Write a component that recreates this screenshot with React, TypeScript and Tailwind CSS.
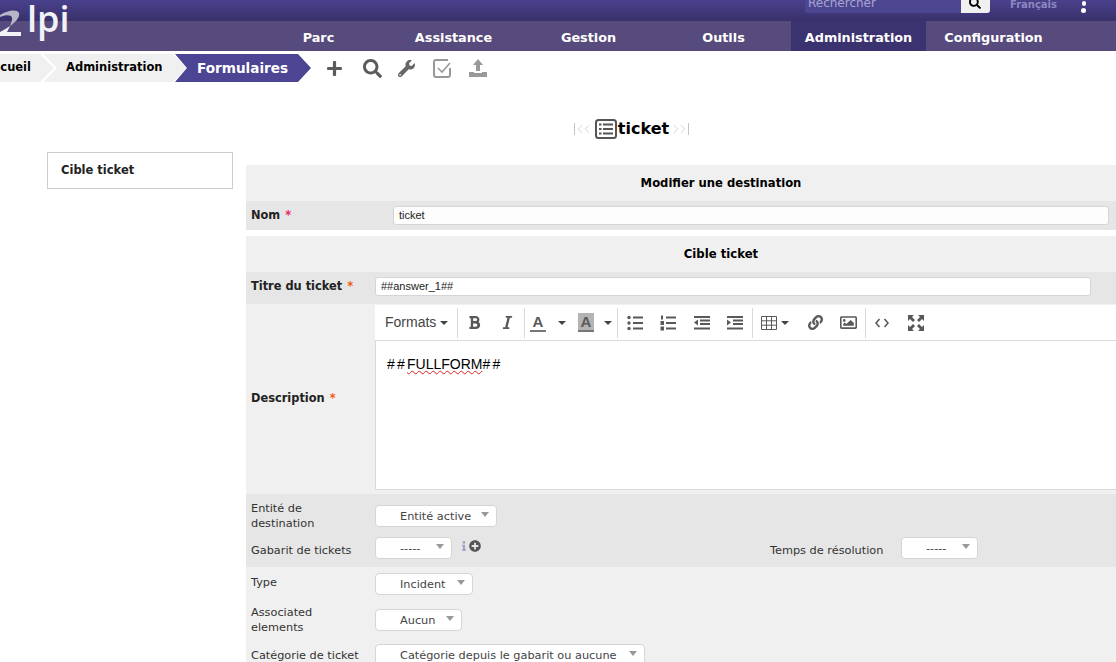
import { FaPlus, FaSearch, FaWrench, FaPlusCircle, FaInfo, FaBold, FaItalic, FaLink, FaRegImage } from "react-icons/fa";
import { ChevronLeft, ChevronRight } from "lucide-react";

const NAV = ["Parc", "Assistance", "Gestion", "Outils", "Administration", "Configuration"];
const UI = "font-['DejaVu_Sans',sans-serif]";
const ARIAL = "font-['Liberation_Sans',Arial,sans-serif]";

function Caret({ className = "" }: { className?: string }) {
  return <span className={`h-0 w-0 border-x-[4px] border-t-[4px] border-x-transparent border-t-[#444] ${className}`} />;
}

function Select({ label, width, left = 24 }: { label: string; width: number; left?: number }) {
  return (
    <div
      className="flex h-[22px] items-center justify-between rounded-[4px] border border-[#d5d5d5] bg-white pr-[7px] text-[11.3px] text-[#444]"
      style={{ width, paddingLeft: left }}
    >
      <span className="whitespace-nowrap pt-[3px]">{label}</span>
      <span className="mb-[3px] h-0 w-0 border-x-[4.5px] border-t-[5px] border-x-transparent border-t-[#999]" />
    </div>
  );
}

function Sep() {
  return <span className="h-[30px] w-px flex-none bg-[#d9d9d9]" />;
}

function Lines({ kind }: { kind: "ul" | "ol" | "out" | "in" }) {
  return (
    <svg width="16" height="16" viewBox="0 0 16 16" fill="#595959">
      {kind === "ul" && (
        <>
          <circle cx="2" cy="2.5" r="1.7" /><circle cx="2" cy="8" r="1.7" /><circle cx="2" cy="13.5" r="1.7" />
          <rect x="6" y="1.5" width="10" height="2" /><rect x="6" y="7" width="10" height="2" /><rect x="6" y="12.5" width="10" height="2" />
        </>
      )}
      {kind === "ol" && (
        <>
          <rect x="1" y="0.5" width="2" height="4" /><rect x="0.5" y="6" width="3.5" height="4" /><rect x="0.5" y="11.5" width="3.5" height="4" />
          <rect x="6" y="1.5" width="10" height="2" /><rect x="6" y="7" width="10" height="2" /><rect x="6" y="12.5" width="10" height="2" />
        </>
      )}
      {(kind === "out" || kind === "in") && (
        <>
          <rect x="0" y="1" width="16" height="2" /><rect x="6" y="4.5" width="10" height="2" /><rect x="6" y="8" width="10" height="2" /><rect x="0" y="12.5" width="16" height="2" />
          {kind === "out" ? <path d="M4 4.5v6L0 7.5z" /> : <path d="M0 4.5v6l4-3z" />}
        </>
      )}
    </svg>
  );
}

function Toolbar() {
  return (
    <div className={`flex h-[35px] items-center bg-white pl-[5px] text-[#595959] ${ARIAL}`}>
      <span className="flex w-[77px] items-center gap-[4px] pl-[5px] text-[14px] text-[#444]">Formats <Caret /></span>
      <Sep />
      <span className="flex w-[33px] justify-center"><FaBold size={15} /></span>
      <span className="flex w-[33px] justify-center"><FaItalic size={15} /></span>
      <Sep />
      <span className="flex w-[46px] items-center gap-[12px] pl-[5px]">
        <span className="w-[16px] border-b-2 border-[#777] text-center text-[15px] font-bold leading-[17px]">A</span>
        <Caret />
      </span>
      <span className="flex w-[46px] items-center gap-[10px] pl-[7px]">
        <span className="w-[16px] border-b-2 border-[#777] bg-[#b4b4b4] text-center text-[15px] font-bold leading-[17px]">A</span>
        <Caret />
      </span>
      <Sep />
      <span className="flex w-[33.5px] justify-center"><Lines kind="ul" /></span>
      <span className="flex w-[33.5px] justify-center"><Lines kind="ol" /></span>
      <span className="flex w-[33.5px] justify-center"><Lines kind="out" /></span>
      <span className="flex w-[33.5px] justify-center"><Lines kind="in" /></span>
      <Sep />
      <span className="flex w-[45px] items-center gap-[4px] pl-[8px]">
        <svg width="16" height="16" viewBox="0 0 16 16" fill="none" stroke="#595959">
          <path d="M.5 1.5h15v13H.5zM.5 5.8h15M.5 10.2h15M5.5 1.5v13M10.5 1.5v13" />
        </svg>
        <Caret />
      </span>
      <span className="flex w-[34px] justify-center"><FaLink size={15} /></span>
      <span className="flex w-[33px] justify-center"><FaRegImage size={17} /></span>
      <Sep />
      <span className="flex w-[32px] justify-center">
        <svg width="14" height="10" viewBox="0 0 14 10" fill="none" stroke="#595959" strokeWidth="1.6">
          <path d="M4.5 1 1 5l3.5 4M9.5 1 13 5 9.5 9" />
        </svg>
      </span>
      <span className="flex w-[36px] justify-center">
        <svg width="16" height="16" viewBox="0 0 16 16" fill="#595959">
          <path d="M0 0h6L4 2l3 3-2 2-3-3-2 2zM16 0v6l-2-2-3 3-2-2 3-3-2-2zM0 16v-6l2 2 3-3 2 2-3 3 2 2zM16 16h-6l2-2-3-3 2-2 3 3 2-2z" />
        </svg>
      </span>
    </div>
  );
}

export default function App() {
  return (
    <div className={`relative h-[662px] w-[1116px] overflow-hidden bg-white text-[11.3px] text-[#222] ${UI}`}>
      <div className="absolute left-0 top-0 flex items-start">
        <svg width="27" height="40" viewBox="0 0 27 40">
          <path d="M0 15c8-5 17-6 19-2 1 4-3 9-9 13 2-5 3-8 1-10-2-1-6-1-11 1z" fill="#b9b5c8" />
          <path d="M10 26c-3 2-6 4-10 6v4h21v-4H7z" fill="#f2f2f6" />
        </svg>
        <span className="-mt-[6px] font-['Open_Sans',sans-serif] text-[36px] font-semibold leading-[50px] text-[#f2f2f6]">lpi</span>
      </div>

      <div className="flex h-[21px] items-end justify-end bg-gradient-to-b from-[#4a418d] to-[#38316b] pb-[8px] pr-[30px]">
        <div className="flex h-[20px] w-[156px] items-center rounded-bl-[3px] bg-[#4d4792] pl-[3px] text-[12px] text-[#a8a5d0]">Rechercher</div>
        <div className="flex h-[20px] w-[29px] items-center justify-center rounded-br-[3px] bg-[#f0f0f0] text-black"><FaSearch size={12} /></div>
        <span className="ml-[20px] mb-[1px] text-[10px] font-bold text-[#8d88bf]">Français</span>
        <span className="ml-[24px] flex flex-col items-center gap-[2px] text-white">
          <span className="h-[5px] w-[4px] rounded-sm bg-white" />
          <span className="h-[5px] w-[5px] rounded-full bg-white" />
        </span>
      </div>

      <nav className="flex h-[30px] bg-[#574a7c] pl-[251px]">
        {NAV.map((item) => (
          <a
            key={item}
            className={`flex w-[135px] items-center justify-center pt-[3px] text-[12.8px] font-bold text-white ${item === "Administration" ? "bg-[#3b3270]" : ""}`}
          >
            {item}
          </a>
        ))}
      </nav>

      <div className="mt-[3px] flex h-[28px] items-center">
        <div className="flex h-full w-[54px] items-center justify-end bg-[#f0f0f0] pr-[23px] text-[11.5px] font-bold text-black [clip-path:polygon(0_0,calc(100%-14px)_0,100%_50%,calc(100%-14px)_100%,0_100%)]">
          cueil
        </div>
        <div className="-ml-[11px] flex h-full w-[144px] items-center bg-[#f0f0f0] pl-[23px] text-[11.5px] font-bold text-black [clip-path:polygon(0_0,calc(100%-14px)_0,100%_50%,calc(100%-14px)_100%,0_100%,14px_50%)]">
          Administration
        </div>
        <div className="-ml-[12px] flex h-full w-[136px] items-center bg-[#4b4593] pl-[22px] text-[13.6px] font-bold text-white [clip-path:polygon(0_0,calc(100%-13px)_0,100%_50%,calc(100%-13px)_100%,0_100%,12px_50%)]">
          Formulaires
        </div>
        <div className="ml-[15px] flex items-center text-[#5b5b5b]">
          <FaPlus size={17} />
          <FaSearch size={19} className="ml-[20px]" />
          <FaWrench size={17} className="ml-[16px] text-[#666]" />
          <svg width="19" height="19" viewBox="0 0 19 19" fill="none" stroke="#999" strokeWidth="2" className="ml-[18px]">
            <path d="M17 9v7a2 2 0 0 1-2 2H3a2 2 0 0 1-2-2V3a2 2 0 0 1 2-2h12" />
            <path d="M5 9l4 4 8-9" strokeWidth="1.6" />
          </svg>
          <svg width="18" height="18" viewBox="0 0 18 18" fill="#999" className="ml-[17px]">
            <path d="M9 0l5 6h-3v6H7V6H4zM0 13h5v1h8v-1h5v5H0z" />
          </svg>
        </div>
      </div>

      <div className="flex">
        <aside className="ml-[47px] mt-[70px] w-[186px] flex-none">
          <div className="flex h-[37px] items-center border border-[#ccc] pl-[13px] text-[11.5px] font-bold text-[#222]">Cible ticket</div>
        </aside>

        <main className="ml-[13px] w-[950px] flex-none">
          <div className="relative mt-[35px] flex h-[24px] w-[1px] translate-x-[385px] items-center justify-center whitespace-nowrap">
            <span className="flex items-center">
              <span className="flex items-center text-[#c4c4c4]"><span className="h-[12px] w-px bg-[#c4c4c4]" /><ChevronLeft size={14} strokeWidth={1.2} className="-ml-[2px]" /><ChevronLeft size={14} strokeWidth={1.2} className="-ml-[7px]" /></span>
              <svg width="22" height="20" viewBox="0 0 22 20" fill="none" className="ml-[1px]">
                <rect x="1" y="1" width="20" height="18" rx="2.5" stroke="#555" strokeWidth="2" />
                <path d="M4 5.5h2.5M8 5.5h10M4 10h2.5M8 10h10M4 14.5h2.5M8 14.5h10" stroke="#555" strokeWidth="2" />
              </svg>
              <span className="ml-[1px] text-[16px] font-bold text-black">ticket</span>
              <span className="flex items-center text-[#c4c4c4]"><ChevronRight size={14} strokeWidth={1.2} /><ChevronRight size={14} strokeWidth={1.2} className="-ml-[7px]" /><span className="-ml-[2px] h-[12px] w-px bg-[#c4c4c4]" /></span>
            </span>
          </div>

          <div className="mt-[24px] flex h-[36px] items-center justify-center bg-[#f0f0f0] pt-[2px] text-[11.6px] font-bold text-black">Modifier une destination</div>
          <div className="flex h-[29px] items-center bg-[#e6e6e6] pl-[5px]">
            <span className="w-[142px] pt-[1px] text-[11.4px] font-bold">Nom <span className="ml-[1px] text-[#f0206a]">*</span></span>
            <div className={`flex h-[19px] w-[716px] items-center rounded-[3px] border border-[#d5d5d5] bg-[#fdfdfd] pl-[5px] text-[11px] text-[#222] ${ARIAL}`}>ticket</div>
          </div>

          <div className="mt-[6px] flex h-[36px] items-center justify-center bg-[#f0f0f0] pt-[1px] text-[11.7px] font-bold text-black">Cible ticket</div>
          <div className="flex h-[32px] items-center bg-[#e6e6e6] pb-[3px] pl-[5px]">
            <span className="w-[124px] pt-[1px] text-[11.4px] font-bold">Titre du ticket <span className="ml-[1px] text-[#f05a14]">*</span></span>
            <div className={`flex h-[19px] w-[716px] items-center rounded-[3px] border border-[#d5d5d5] bg-white pl-[5px] text-[11px] text-[#222] ${ARIAL}`}>##answer_1##</div>
          </div>

          <div className="flex h-[190px] bg-[#f0f0f0] pl-[5px]">
            <span className="w-[124px] self-center text-[11.4px] font-bold">Description <span className="ml-[1px] text-[#f05a14]">*</span></span>
            <div className="flex-1 pt-[1px]">
              <Toolbar />
              <div className={`h-[150px] border border-[#d9d9d9] bg-white pl-[11px] pt-[13px] text-[14px] text-black ${ARIAL}`}>
                <span className="tracking-[2.2px]">##</span><span className="underline decoration-[#e02020] decoration-wavy decoration-1 underline-offset-1">FULLFORM</span><span className="tracking-[2.2px]">##</span>
              </div>
            </div>
          </div>

          <div className="bg-[#e6e6e6] pl-[5px] text-[#333]">
            <div className="flex h-[43px] items-center">
              <span className="w-[124px] leading-[15px]">Entité de<br />destination</span>
              <Select label="Entité active" width={122} />
            </div>
            <div className="flex h-[30px] items-start">
              <span className="mt-[6px] w-[124px]">Gabarit de tickets</span>
              <Select label="-----" width={77} />
              <span className="ml-[7px] mt-[3px] flex items-center">
                <FaInfo size={10} className="text-[#a79fc9]" />
                <FaPlusCircle size={12} className="text-[#555]" />
              </span>
              <span className="ml-[289px] mt-[6px] w-[131px]">Temps de résolution</span>
              <Select label="-----" width={77} />
            </div>
          </div>

          <div className="bg-[#f0f0f0] pl-[5px] text-[#333]">
            <div className="flex h-[33px] items-center">
              <span className="w-[124px]">Type</span>
              <Select label="Incident" width={98} />
            </div>
            <div className="flex h-[40px] items-center">
              <span className="w-[124px] leading-[15px]">Associated<br />elements</span>
              <Select label="Aucun" width={87} />
            </div>
            <div className="flex h-[30px] items-start pt-[4px]">
              <span className="mt-[4px] w-[124px]">Catégorie de ticket</span>
              <Select label="Catégorie depuis le gabarit ou aucune" width={270} />
            </div>
          </div>
        </main>
      </div>
    </div>
  );
}
